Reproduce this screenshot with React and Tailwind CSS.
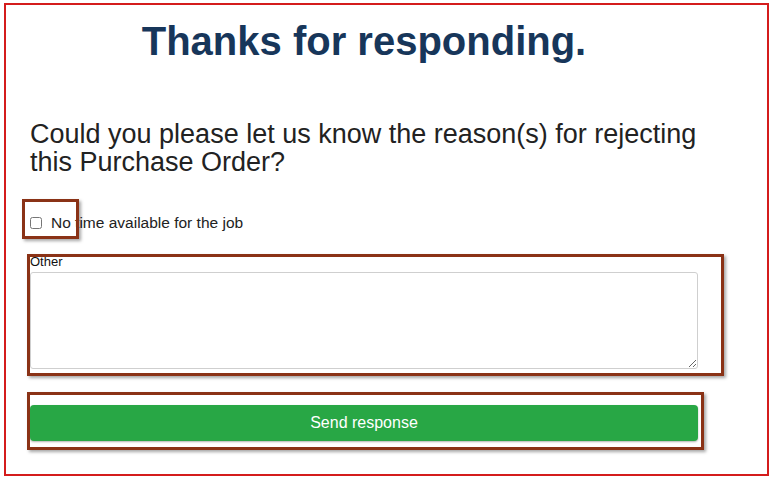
import React from "react";

const font = { fontFamily: '"Liberation Sans", Arial, sans-serif' };

function Callout({ className }) {
  return (
    <div
      className={`pointer-events-none absolute border-[3px] border-[#8a3216] shadow-[2px_2px_3px_rgba(0,0,0,0.35)] ${className}`}
    />
  );
}

export default function App() {
  return (
    <div className="w-[771px] h-[480px] bg-white pt-[3px]" style={font}>
      <div className="ml-[4px] w-[765px] h-[473px] border-2 border-[#d41c1c] pl-[24px] pt-[12px]">
        <div className="w-[668px]">
          {/* Heading */}
          <h1 className="text-center text-[40px] leading-[48px] font-bold text-[#17365a]">
            Thanks for responding.
          </h1>

          {/* Question */}
          <p className="mt-[55px] text-[27px] leading-[28px] text-[#222]">
            Could you please let us know the reason(s) for rejecting this Purchase Order?
          </p>

          {/* Reason checkbox */}
          <div className="relative mt-[37px] flex items-center h-[20px]">
            <input type="checkbox" className="w-[12px] h-[12px] m-0" />
            <label className="ml-[9px] text-[15.5px] leading-[20px] text-[#222]">
              No time available for the job
            </label>
            <Callout className="left-[-8px] top-[-14px] w-[57px] h-[40px]" />
          </div>

          {/* Other */}
          <div className="relative mt-[21px]">
            <label className="block text-[13px] leading-[16px] text-[#111]">Other</label>
            <textarea className="mt-[2px] block w-[668px] h-[97px] border border-[#cfcfcf] rounded-[3px] outline-none" />
            <Callout className="left-[-3px] top-[0px] w-[697px] h-[122px]" />
          </div>

          {/* Submit */}
          <div className="relative mt-[36px]">
            <button className="w-[668px] h-[36px] rounded-[4px] bg-[#28a745] text-white text-[16px] shadow-[0_1px_2px_rgba(0,0,0,0.3)]">
              Send response
            </button>
            <Callout className="left-[-3px] top-[-13px] w-[677px] h-[58px]" />
          </div>
        </div>
      </div>
    </div>
  );
}
